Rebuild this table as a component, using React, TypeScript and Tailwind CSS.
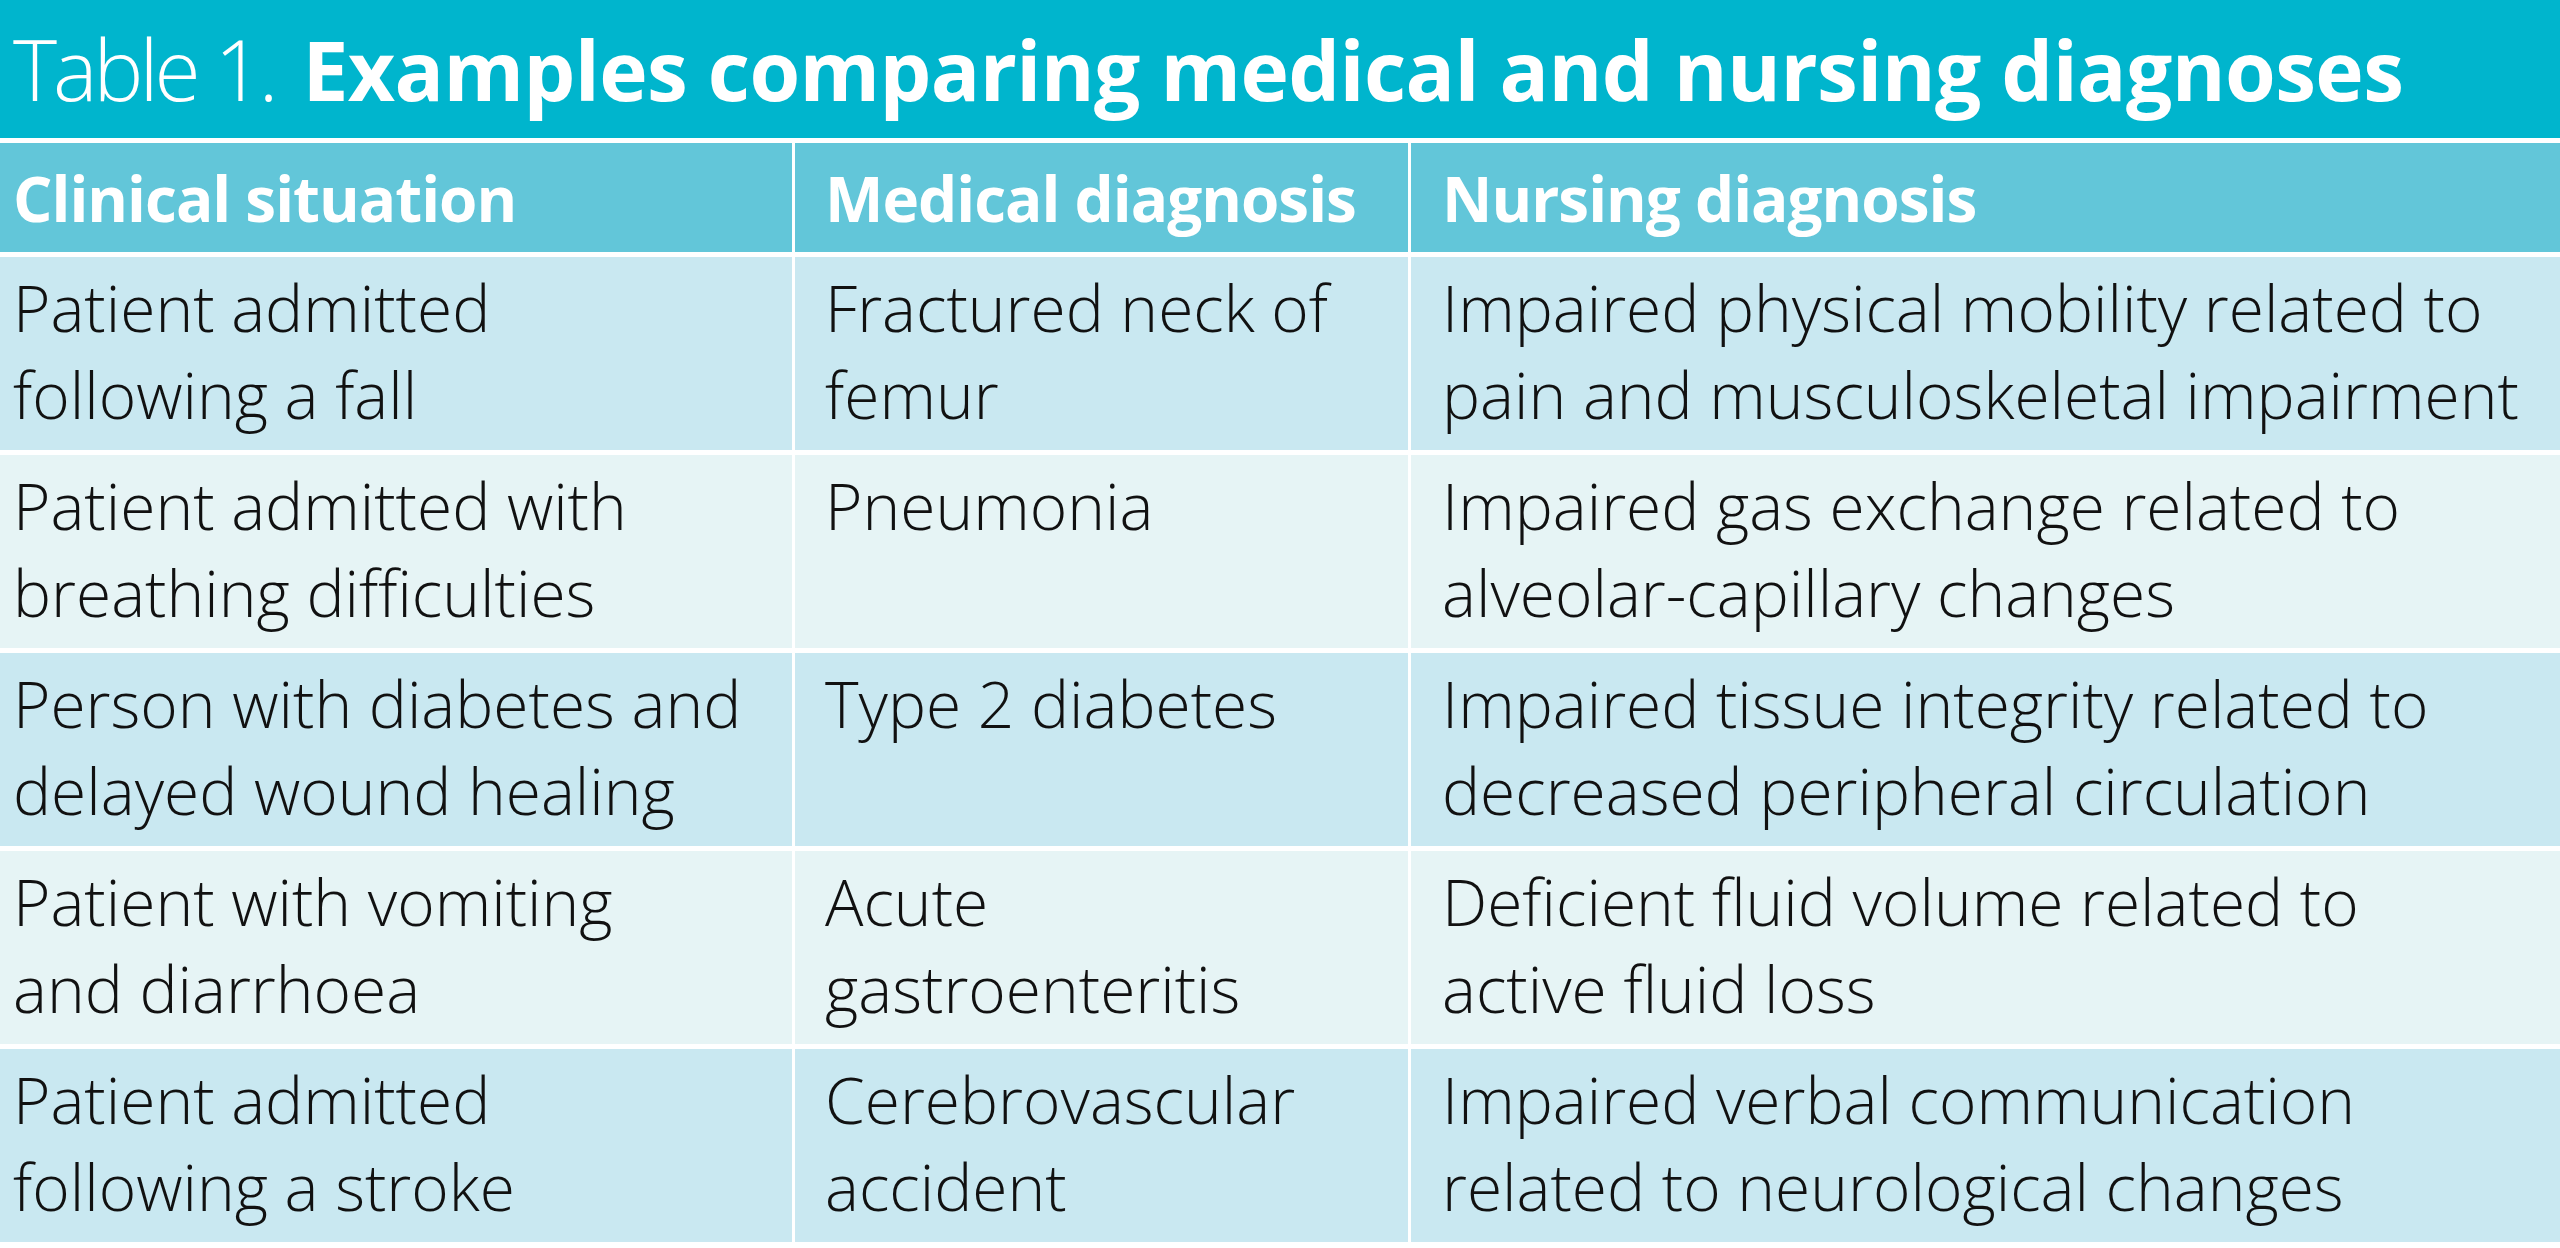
const rows = [
  {
    bg: "bg-[#c9e8f1]",
    cells: [
      ["Patient admitted", "following a fall"],
      ["Fractured neck of", "femur"],
      ["Impaired physical mobility related to", "pain and musculoskeletal impairment"],
    ],
  },
  {
    bg: "bg-[#e6f4f5]",
    cells: [
      ["Patient admitted with", "breathing difficulties"],
      ["Pneumonia"],
      ["Impaired gas exchange related to", "alveolar-capillary changes"],
    ],
  },
  {
    bg: "bg-[#c9e8f1]",
    cells: [
      ["Person with diabetes and", "delayed wound healing"],
      ["Type 2 diabetes"],
      ["Impaired tissue integrity related to", "decreased peripheral circulation"],
    ],
  },
  {
    bg: "bg-[#e6f4f5]",
    cells: [
      ["Patient with vomiting", "and diarrhoea"],
      ["Acute", "gastroenteritis"],
      ["Deficient fluid volume related to", "active fluid loss"],
    ],
  },
  {
    bg: "bg-[#c9e8f1]",
    cells: [
      ["Patient admitted", "following a stroke"],
      ["Cerebrovascular", "accident"],
      ["Impaired verbal communication", "related to neurological changes"],
    ],
  },
];

const pad = ["pl-[13px]", "pl-[30px]", "pl-[31px]"];

export default function App() {
  return (
    <div className="w-[2560px] h-[1248px] bg-white overflow-hidden font-['Open_Sans',sans-serif] text-[#111]">
      <div className="h-[138px] bg-[#00b5cd] flex items-center pl-[13px] text-white leading-none whitespace-nowrap">
        <span className="font-extralight text-[84px] tracking-[-4px]">Table 1.</span>
        <span className="font-bold text-[82px] tracking-[-0.6px] ml-[28px]">
          Examples comparing medical and nursing diagnoses
        </span>
      </div>

      <div className="mt-[5px] grid grid-cols-[792px_613px_1149px] gap-x-[3px] gap-y-[5px]">
        {["Clinical situation", "Medical diagnosis", "Nursing diagnosis"].map((h, i) => (
          <div
            key={h}
            className={`h-[109px] bg-[#62c6d9] flex items-center ${pad[i]} text-white font-bold text-[62px] tracking-[-1px] leading-none whitespace-nowrap`}
          >
            {h}
          </div>
        ))}

        {rows.map((row, r) =>
          row.cells.map((lines, c) => (
            <div
              key={`${r}-${c}`}
              className={`h-[193px] ${row.bg} ${pad[c]} pt-[7px] font-light text-[64px] leading-[87px] whitespace-nowrap`}
            >
              {lines.map((l) => (
                <div key={l}>{l}</div>
              ))}
            </div>
          ))
        )}
      </div>
    </div>
  );
}
